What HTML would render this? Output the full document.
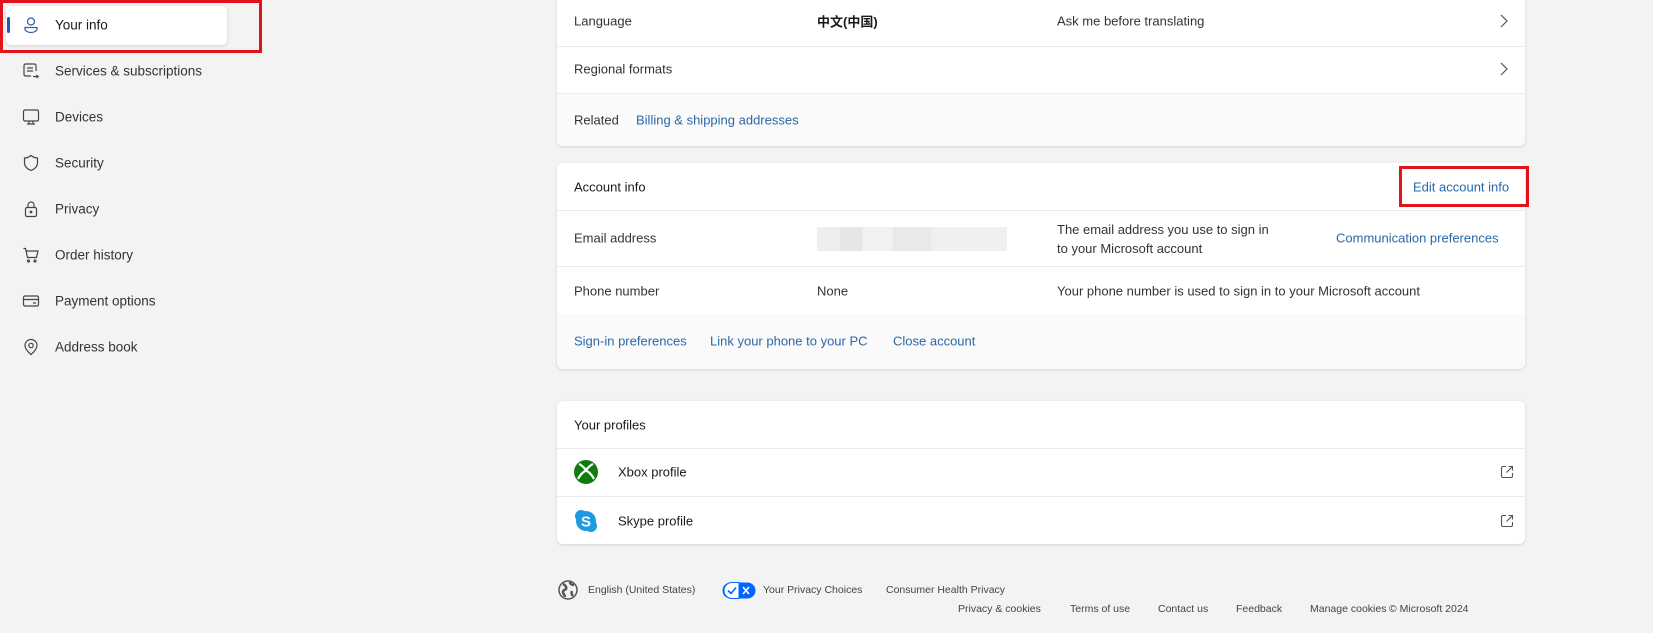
<!DOCTYPE html>
<html><head><meta charset="utf-8"><style>
*{box-sizing:border-box;margin:0;padding:0}
body{width:1653px;height:633px;background:#f3f3f3;font-family:"Liberation Sans","Noto Sans CJK SC",sans-serif;font-size:13px;color:#333;position:relative;overflow:hidden}
.a{position:absolute;white-space:nowrap}
.card{position:absolute;left:557px;width:968px;background:#fff;border-radius:6px;box-shadow:0 1px 3px rgba(0,0,0,.13);overflow:hidden}
.hr{position:absolute;left:0;right:0;height:1px;background:#ececec}
.gray{position:absolute;left:0;right:0;bottom:0;background:#fafafa}
.lk{color:#2a68a8}
.t{transform:translateY(-50%)}
.nav{position:absolute;left:55px;font-size:13.5px;color:#333;transform:translateY(-50%)}
.ic{position:absolute;left:22px;transform:translateY(-50%)}
.ft{font-size:10.5px;color:#444}
</style></head><body>
<div class="a" style="left:6px;top:6px;width:221px;height:39px;background:#fff;border-radius:5px;box-shadow:0 1px 3px rgba(0,0,0,.15)"></div>
<div class="a" style="left:7px;top:17px;width:3px;height:16px;background:#0f5fb5;border-radius:2px"></div>
<div class="a" style="left:0;top:0;width:262px;height:53px;border:3px solid #e0141a"></div>
<svg class="ic" style="top:25px" width="18" height="18" viewBox="0 0 18 18" fill="none" stroke="#2a5fa0" stroke-width="1.2"><circle cx="9" cy="5.5" r="3.5"/><path d="M3 11.5h12v1.5c0 2-3 3.5-6 3.5s-6-1.5-6-3.5z"/></svg>
<div class="nav" style="top:25px;color:#1a1a1a">Your info</div>
<svg class="ic" style="top:71px" width="18" height="18" viewBox="0 0 18 18" fill="none" stroke="#444" stroke-width="1.2"><path d="M14 9V3.5c0-.8-.7-1.5-1.5-1.5h-9C2.7 2 2 2.7 2 3.5v9c0 .8.7 1.5 1.5 1.5H9M5 6h6M5 9h6M11 14.5h5l-1.5-1.5M16 14.5L14.5 16"/></svg>
<div class="nav" style="top:71px">Services &amp; subscriptions</div>
<svg class="ic" style="top:117px" width="18" height="18" viewBox="0 0 18 18" fill="none" stroke="#444" stroke-width="1.2"><rect x="1.5" y="2" width="15" height="11" rx="1.5"/><path d="M7 13v2.5M11 13v2.5M5 16h8"/></svg>
<div class="nav" style="top:117px">Devices</div>
<svg class="ic" style="top:163px" width="18" height="18" viewBox="0 0 18 18" fill="none" stroke="#444" stroke-width="1.2"><path d="M9 1.5C6.5 3.5 4.5 4 2.5 4v5c0 4 3 6 6.5 7.5 3.5-1.5 6.5-3.5 6.5-7.5V4c-2 0-4-.5-6.5-2.5z"/></svg>
<div class="nav" style="top:163px">Security</div>
<svg class="ic" style="top:209px" width="18" height="18" viewBox="0 0 18 18" fill="none" stroke="#444" stroke-width="1.2"><rect x="3.5" y="7.5" width="11" height="9" rx="1.5"/><path d="M6 7.5V5a3 3 0 016 0v2.5"/><circle cx="9" cy="12" r=".8" fill="#444"/></svg>
<div class="nav" style="top:209px">Privacy</div>
<svg class="ic" style="top:255px" width="18" height="18" viewBox="0 0 18 18" fill="none" stroke="#444" stroke-width="1.2"><path d="M1.5 2.5h2l2 9h9l1.5-6.5H4.2"/><circle cx="6.5" cy="15" r="1"/><circle cx="13" cy="15" r="1"/></svg>
<div class="nav" style="top:255px">Order history</div>
<svg class="ic" style="top:301px" width="18" height="18" viewBox="0 0 18 18" fill="none" stroke="#444" stroke-width="1.2"><rect x="1.5" y="4" width="15" height="10" rx="1.5"/><path d="M1.5 7.5h15M11 11h3"/></svg>
<div class="nav" style="top:301px">Payment options</div>
<svg class="ic" style="top:347px" width="18" height="18" viewBox="0 0 18 18" fill="none" stroke="#444" stroke-width="1.2"><path d="M9 16.5c-3-2.5-6-5.5-6-9a6 6 0 0112 0c0 3.5-3 6.5-6 9z"/><circle cx="9" cy="7.5" r="2.2"/></svg>
<div class="nav" style="top:347px">Address book</div>

<div class="card" style="top:-10px;height:156px">
  <div class="gray" style="height:52px"></div>
  <div class="hr" style="top:56px"></div>
  <div class="hr" style="top:103px"></div>
  <div class="a t" style="left:17px;top:31px">Language</div>
  <div class="a t" style="left:260px;top:31px;color:#1a1a1a;font-weight:bold">中文(中国)</div>
  <div class="a t" style="left:500px;top:31px">Ask me before translating</div>
  <svg class="a t" style="left:940px;top:31px" width="12" height="16" viewBox="0 0 12 16"><path d="M4 2l6 6-6 6" stroke="#555" stroke-width="1.2" fill="none"/></svg>
  <div class="a t" style="left:17px;top:79px">Regional formats</div>
  <svg class="a t" style="left:940px;top:79px" width="12" height="16" viewBox="0 0 12 16"><path d="M4 2l6 6-6 6" stroke="#555" stroke-width="1.2" fill="none"/></svg>
  <div class="a t" style="left:17px;top:130px">Related</div>
  <div class="a t lk" style="left:79px;top:130px">Billing &amp; shipping addresses</div>
</div>

<div class="card" style="top:163px;height:206px">
  <div class="gray" style="height:55px"></div>
  <div class="hr" style="top:47px"></div>
  <div class="hr" style="top:103px"></div>
  <div class="a t" style="left:17px;top:24px;color:#1a1a1a">Account info</div>
  <div class="a t lk" style="left:856px;top:24px">Edit account info</div>
  <div class="a t" style="left:17px;top:75px">Email address</div>
  <div class="a" style="left:260px;top:64px;width:190px;height:24px;background:linear-gradient(90deg,#eee 0 12%,#e6e6e6 12% 24%,#f2f2f2 24% 40%,#e9e9e9 40% 60%,#efefef 60% 100%)"></div>
  <div class="a" style="left:500px;top:57px;line-height:19px">The email address you use to sign in<br>to your Microsoft account</div>
  <div class="a t lk" style="left:779px;top:75px">Communication preferences</div>
  <div class="a t" style="left:17px;top:128px">Phone number</div>
  <div class="a t" style="left:260px;top:128px">None</div>
  <div class="a t" style="left:500px;top:128px">Your phone number is used to sign in to your Microsoft account</div>
  <div class="a t lk" style="left:17px;top:178px">Sign-in preferences</div>
  <div class="a t lk" style="left:153px;top:178px">Link your phone to your PC</div>
  <div class="a t lk" style="left:336px;top:178px">Close account</div>
</div>
<div class="a" style="left:1399px;top:166px;width:130px;height:41px;border:3px solid #e0141a"></div>

<div class="card" style="top:401px;height:143px">
  <div class="hr" style="top:47px"></div>
  <div class="hr" style="top:95px"></div>
  <div class="a t" style="left:17px;top:24px;color:#1a1a1a">Your profiles</div>
  <svg class="a t" style="left:17px;top:71px" width="24" height="24" viewBox="0 0 24 24"><circle cx="12" cy="12" r="12" fill="#107c10"/><path d="M5 4c3 1 5 4 7 6 2-2 4-5 7-6M4 19c2-4 5-7 8-8.5 3 1.5 6 4.5 8 8.5" stroke="#fff" stroke-width="2.2" fill="none"/></svg>
  <div class="a t" style="left:61px;top:71px;color:#1a1a1a">Xbox profile</div>
  <svg class="a t" style="left:942px;top:71px" width="16" height="16" viewBox="0 0 16 16" fill="none" stroke="#555" stroke-width="1.1"><path d="M7 2.5H4A1.5 1.5 0 002.5 4v8A1.5 1.5 0 004 13.5h8a1.5 1.5 0 001.5-1.5V9M9.5 2.5h4v4M13.5 2.5L7.5 8.5"/></svg>
  <svg class="a t" style="left:17px;top:120px" width="24" height="24" viewBox="0 0 24 24"><circle cx="7" cy="7" r="6" fill="#1e9be0"/><circle cx="17" cy="17" r="6" fill="#1e9be0"/><circle cx="12" cy="12" r="10" fill="#1e9be0"/><text x="12" y="17.5" text-anchor="middle" font-family="Liberation Sans" font-weight="bold" font-size="15" fill="#fff">S</text></svg>
  <div class="a t" style="left:61px;top:120px;color:#1a1a1a">Skype profile</div>
  <svg class="a t" style="left:942px;top:120px" width="16" height="16" viewBox="0 0 16 16" fill="none" stroke="#555" stroke-width="1.1"><path d="M7 2.5H4A1.5 1.5 0 002.5 4v8A1.5 1.5 0 004 13.5h8a1.5 1.5 0 001.5-1.5V9M9.5 2.5h4v4M13.5 2.5L7.5 8.5"/></svg>
</div>

<svg class="a" style="left:558px;top:580px" width="20" height="20" viewBox="0 0 20 20"><circle cx="10" cy="10" r="9" fill="none" stroke="#555" stroke-width="1.5"/><path d="M5 4c2 1 4 3 3 5-1 1-3 1-3 3s2 3 2 5M12 2c0 2 2 3 4 3M14 11c-1 2 0 4 1 5" stroke="#555" stroke-width="2.5" fill="none"/></svg>
<div class="a ft t" style="left:588px;top:590px">English (United States)</div>
<svg class="a" style="left:722px;top:582px" width="34" height="17" viewBox="0 0 34 17"><rect x=".5" y=".5" width="33" height="16" rx="8" fill="#0066ff"/><path d="M2 8.5a8 8 0 018-8h7v16h-7a8 8 0 01-8-8z" fill="#fff" stroke="#0066ff"/><path d="M6 8.5l3 3 5-6" stroke="#0066ff" stroke-width="1.6" fill="none"/><path d="M21 5l6 7M27 5l-6 7" stroke="#fff" stroke-width="1.6"/></svg>
<div class="a ft t" style="left:763px;top:590px">Your Privacy Choices</div>
<div class="a ft t" style="left:886px;top:590px">Consumer Health Privacy</div>
<div class="a ft t" style="left:958px;top:609px">Privacy &amp; cookies</div>
<div class="a ft t" style="left:1070px;top:609px">Terms of use</div>
<div class="a ft t" style="left:1158px;top:609px">Contact us</div>
<div class="a ft t" style="left:1236px;top:609px">Feedback</div>
<div class="a ft t" style="left:1310px;top:609px">Manage cookies</div>
<div class="a ft t" style="left:1389px;top:609px">© Microsoft 2024</div>
</body></html>
